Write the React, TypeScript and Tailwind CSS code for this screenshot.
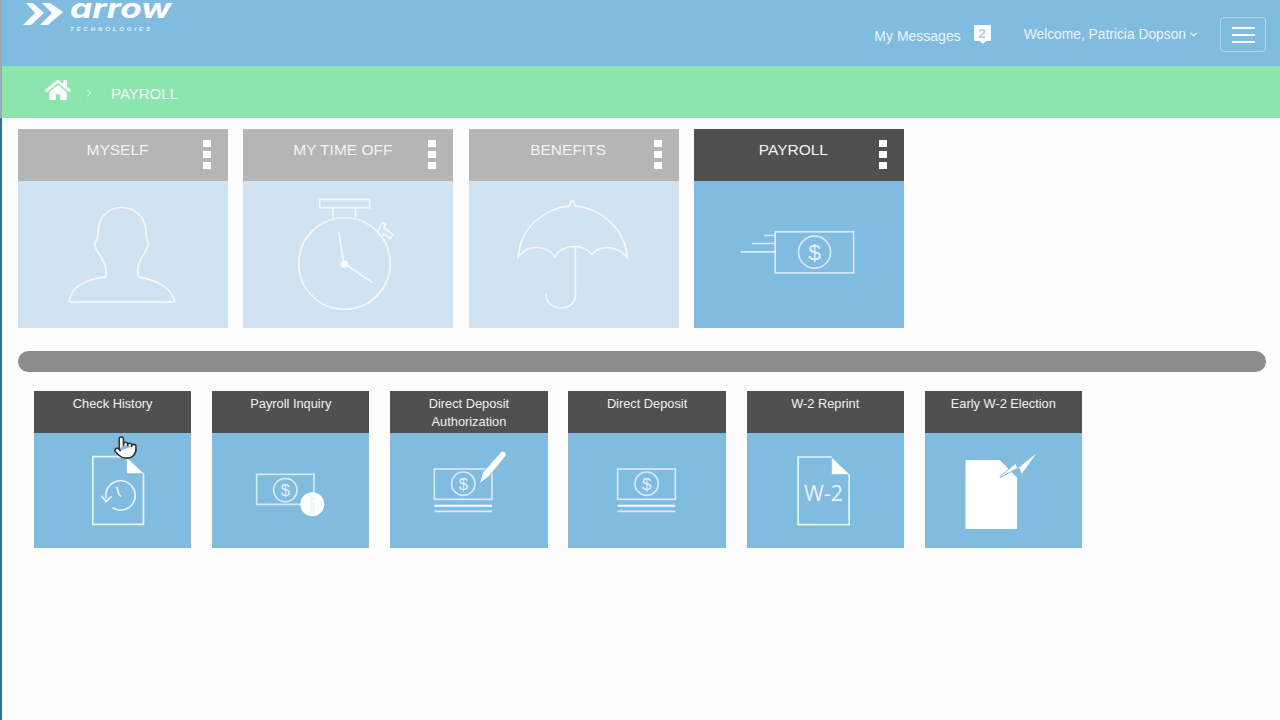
import type { ReactNode } from 'react'
import { ChevronDown, ChevronRight, Pointer } from 'lucide-react'
import { FaHome } from 'react-icons/fa'

const sans = { fontFamily: '"Liberation Sans", Arial, sans-serif' }

function PersonIcon() {
  return (
    <svg viewBox="54 168 630 440" className="h-full w-full" fill="none" stroke="#f4f9fc" strokeWidth="5">
      <path d="M208 530 C210 490 250 462 318 455 C320 430 312 410 305 400 C300 385 282 375 285 352 C292 345 294 335 294 320 C296 280 320 247 365 247 C410 247 436 280 438 320 C438 335 440 345 445 355 C445 375 430 385 424 400 C415 415 410 435 416 455 C470 465 515 485 524 530 Z" />
    </svg>
  )
}

function StopwatchIcon() {
  return (
    <svg viewBox="731 168 629 440" className="h-full w-full" fill="none" stroke="#f4f9fc" strokeWidth="5">
      <circle cx="1035" cy="415" r="137" />
      <rect x="961" y="223" width="149" height="25" />
      <path d="M1000 248 V282 M1068 248 V282" />
      <path d="M1133 322 L1148 292 L1158 298 L1153 308 L1180 328 L1172 340 L1152 326 L1146 338" />
      <path d="M1018 322 L1033 415 M1035 415 L1118 472" />
      <circle cx="1035" cy="417" r="11" fill="#f4f9fc" stroke="none" />
    </svg>
  )
}

function UmbrellaIcon() {
  return (
    <svg viewBox="27 168 630 440" className="h-full w-full" fill="none" stroke="#f4f9fc" strokeWidth="5">
      <path d="M175 395 C180 310 250 250 330 242 L332 228 L342 228 L345 242 C425 250 495 310 502 398 C480 368 425 352 395 388 C375 360 310 350 285 395 C260 360 205 355 175 395 Z" />
      <path d="M346 365 V510 C346 562 258 562 257 505" />
    </svg>
  )
}

function Dollar({ x, y, r, size }: { x: number; y: number; r: number; size: number }) {
  return (
    <>
      <circle cx={x} cy={y} r={r} />
      <text x={x} y={y + size * 0.36} textAnchor="middle" fontSize={size} fill="#e4f1f9" stroke="none" style={sans}>
        $
      </text>
    </>
  )
}

function SpeedBillIcon() {
  return (
    <svg viewBox="703 168 629 440" className="h-full w-full" fill="none" stroke="#d8eaf6" strokeWidth="5">
      <rect x="946" y="320" width="235" height="123" />
      <Dollar x={1064} y={381} r={48} size={68} />
      <path d="M913 331 H946 M877 355 H946 M843 380 H946" />
    </svg>
  )
}

function HistoryDocIcon() {
  return (
    <svg viewBox="42 144 471 345" className="h-full w-full" fill="none" stroke="#eaf4fa" strokeWidth="5">
      <path d="M320 215 H218 V418 H370 V265" />
      <path d="M320 218 L370 265 H320 Z" fill="#ffffff" stroke="none" />
      <path d="M258 340 A44 44 0 1 1 277 368" />
      <path d="M244 332 L258 350 L274 334" />
      <path d="M290 305 L296 328 L303 334" />
    </svg>
  )
}

function InquiryIcon() {
  return (
    <svg viewBox="576 144 472 345" className="h-full w-full" fill="none" stroke="#d8eaf6" strokeWidth="5">
      <rect x="710" y="268" width="172" height="90" />
      <Dollar x={796} y={315} r={35} size={50} />
      <circle cx="877" cy="358" r="36" fill="#ffffff" stroke="none" />
      <path d="M873 338 H881 V345 H873 Z M873 351 H881 V381 H873 Z" stroke="#d5e7f3" strokeWidth="2" />
    </svg>
  )
}

function DepositIcon({ pen }: { pen?: boolean }) {
  const left = pen ? 163 : 715
  return (
    <svg viewBox={pen ? '30 144 472 345' : '566 144 472 345'} className="h-full w-full" fill="none" stroke="#d8eaf6" strokeWidth="5">
      <rect x={left} y="252" width="173" height="91" />
      <Dollar x={left + 87} y={296} r={35} size={50} />
      <path d={`M${left} 362 H${left + 173}`} stroke="#ffffff" strokeWidth="6" />
      <path d={`M${left} 379 H${left + 173}`} strokeWidth="5" />
      {pen && (
        <path
          d="M300 293 L310 262 L365 200 Q378 198 377 212 L325 275 Z"
          fill="#ffffff"
          stroke="#80bbe0"
          strokeWidth="6"
          paintOrder="stroke"
        />
      )}
    </svg>
  )
}

function W2Icon() {
  return (
    <svg viewBox="21 144 471 345" className="h-full w-full" fill="none" stroke="#eaf4fa" strokeWidth="5">
      <path d="M275 216 H174 V419 H327 V268" />
      <path d="M275 218 L327 268 H275 Z" fill="#ffffff" stroke="none" />
      <text x="250" y="348" textAnchor="middle" fontSize="64" fill="#eaf4fa" stroke="none" style={{ fontFamily: '"Open Sans", sans-serif' }}>
        W-2
      </text>
    </svg>
  )
}

function ElectionIcon() {
  return (
    <svg viewBox="556 144 471 345" className="h-full w-full">
      <path d="M677 225 H780 L832 278 V432 H677 Z" fill="#ffffff" />
      <path
        d="M780 277 L828 236 L832 252 L890 205 L846 266 L838 246 Z"
        fill="#ffffff"
        stroke="#80bbe0"
        strokeWidth="5"
        paintOrder="stroke"
      />
    </svg>
  )
}

const CARDS: { title: string; icon: ReactNode; active?: boolean }[] = [
  { title: 'MYSELF', icon: <PersonIcon /> },
  { title: 'MY TIME OFF', icon: <StopwatchIcon /> },
  { title: 'BENEFITS', icon: <UmbrellaIcon /> },
  { title: 'PAYROLL', icon: <SpeedBillIcon />, active: true },
]

const TILES: { title: string; icon: ReactNode }[] = [
  { title: 'Check History', icon: <HistoryDocIcon /> },
  { title: 'Payroll Inquiry', icon: <InquiryIcon /> },
  { title: 'Direct Deposit Authorization', icon: <DepositIcon pen /> },
  { title: 'Direct Deposit', icon: <DepositIcon /> },
  { title: 'W-2 Reprint', icon: <W2Icon /> },
  { title: 'Early W-2 Election', icon: <ElectionIcon /> },
]

function Logo() {
  return (
    <div className="flex items-start gap-[7px] pl-[21px] pt-[3px]">
      <svg viewBox="0 0 40 22" className="h-[22px] w-[40px]" fill="#ffffff">
        <path d="M3 0 H10 L21 10 L8 22 H0 L12 10 Z" />
        <path d="M19 0 H27 L40 9 L25 22 H17 L29 10 Z" />
      </svg>
      <div className="flex flex-col">
        <span
          className="mt-[1px] mb-[1px] inline-block h-[16px] origin-left scale-x-[1.3] text-[27px] leading-[10px] font-bold italic text-white"
          style={{ fontFamily: 'Inter, sans-serif' }}
        >
          arrow
        </span>
        <span className="mt-[5px] text-[6px] leading-[7px] font-bold italic tracking-[2.9px] text-[#e4f1f9]">TECHNOLOGIES</span>
      </div>
    </div>
  )
}

export default function App() {
  return (
    <div className="relative flex h-[720px] w-[1280px] overflow-hidden bg-[#fdfdfd]" style={sans}>
      <div className="flex w-[2px] flex-col">
        <div className="h-[118px] bg-[#9aa9b3]" />
        <div className="flex-1 bg-[#2f6f9c]" />
      </div>

      <div className="flex min-w-0 flex-1 flex-col">
        <header className="flex h-[66px] items-start justify-between bg-[#80bbe0]">
          <Logo />
          <div className="flex items-start pr-[14px] pt-[17px] text-[14px] text-[#eef6fb]">
            <span className="mt-[10px] leading-[18px]">My Messages</span>
            <div className="relative ml-[13px] mt-[8px] flex h-[16px] w-[17px] items-center justify-center bg-white text-[13px] leading-none font-bold text-[#a9d2ec]">
              2
              <div className="absolute -bottom-[3px] left-[6px] h-0 w-0 border-x-[3px] border-t-[3px] border-x-transparent border-t-white" />
            </div>
            <span className="ml-[33px] mt-[9px] text-[13.8px] leading-[18px]">Welcome, Patricia Dopson</span>
            <ChevronDown size={11} strokeWidth={2.5} className="ml-[2px] mt-[12px]" />
            <button className="ml-[21px] flex h-[35px] w-[46px] flex-col items-center justify-center gap-[5px] rounded-[4px] border border-[#b5d8ee]">
              <span className="h-[2px] w-[23px] bg-white" />
              <span className="h-[2px] w-[23px] bg-white" />
              <span className="h-[2px] w-[23px] bg-white" />
            </button>
          </div>
        </header>

        <nav className="flex h-[52px] items-center bg-[#8de5ae] pl-[43px] text-[15px] text-[#eefaf2]">
          <FaHome size={26} className="-mt-[5px] text-white" />
          <ChevronRight size={12} strokeWidth={2} className="ml-[12px] mt-[2px]" />
          <span className="ml-[16px] mt-[4px]">PAYROLL</span>
        </nav>

        <section className="flex gap-[15.3px] pl-[16px] pt-[11px]">
          {CARDS.map((card) => (
            <div key={card.title} className="w-[210px]">
              <div className={`flex h-[52px] pl-[14px] ${card.active ? 'bg-[#505050]' : 'bg-[#b5b5b5]'}`}>
                <div className="flex-1 pt-[12px] text-center text-[15.5px] leading-[18px] text-[#f3f3f3]">{card.title}</div>
                <div className="mr-[17px] flex w-[8px] flex-col gap-[4px] pt-[11px]">
                  <span className="h-[7px] bg-white" />
                  <span className="h-[7px] bg-white" />
                  <span className="h-[7px] bg-white" />
                </div>
              </div>
              <div className={`h-[147px] ${card.active ? 'bg-[#80bbe0]' : 'bg-[#cfe3f2]'}`}>{card.icon}</div>
            </div>
          ))}
        </section>

        <div className="ml-[16px] mt-[23px] h-[21px] w-[1248px] rounded-full bg-[#8c8c8c]" />

        <section className="flex gap-[20.85px] pl-[32px] pt-[19px]">
          {TILES.map((tile) => (
            <div key={tile.title} className="w-[157.3px]">
              <div className="h-[42px] bg-[#505050] px-[20px] pt-[4px] text-center text-[12.8px] leading-[18px] text-[#f0f0f0]">{tile.title}</div>
              <div className="h-[115px] bg-[#80bbe0]">{tile.icon}</div>
            </div>
          ))}
        </section>
      </div>

      <Pointer size={25} fill="#ffffff" stroke="#333333" strokeWidth={1.5} className="absolute left-[113px] top-[435px]" />
    </div>
  )
}
